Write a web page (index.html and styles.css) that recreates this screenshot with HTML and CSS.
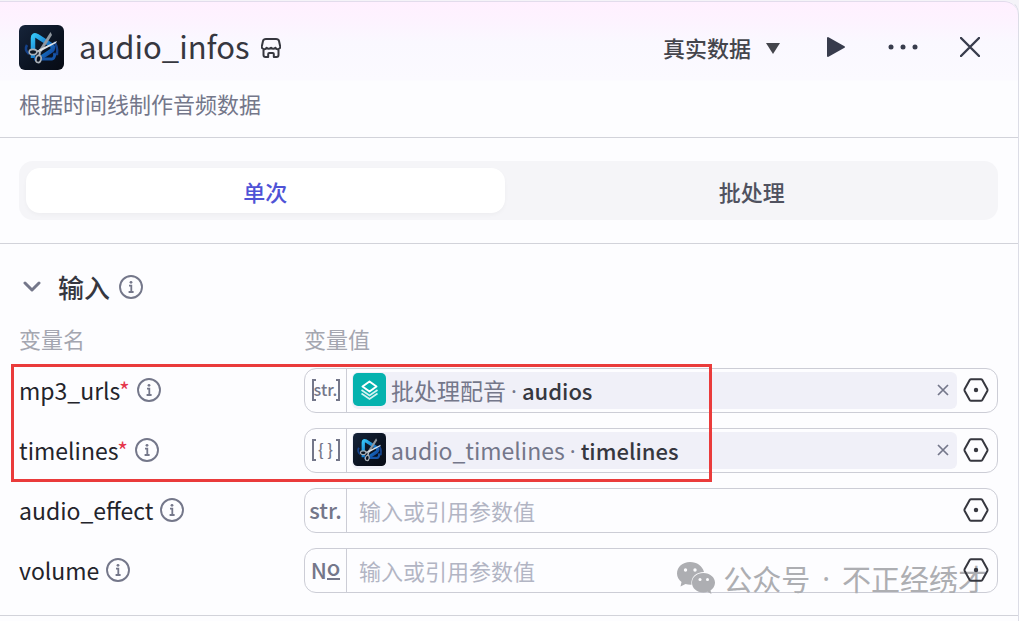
FILE: index.html
```html
<!DOCTYPE html>
<html lang="zh-CN">
<head>
    <meta charset="UTF-8">
    <meta name="viewport" content="width=device-width, initial-scale=1.0">
    <title>audio_infos</title>
    <link rel="stylesheet" href="styles.css">
</head>
<body>
    <!-- 公用图标 -->
    <svg class="sprite" aria-hidden="true">
        <defs>
            <linearGradient id="tileBg" x1="0" y1="0" x2="1" y2="1">
                <stop offset="0" stop-color="#16243a"/>
                <stop offset="0.6" stop-color="#0a1220"/>
                <stop offset="1" stop-color="#070b14"/>
            </linearGradient>
            <linearGradient id="tileBlue" x1="0" y1="0" x2="1" y2="1">
                <stop offset="0" stop-color="#35c3f5"/>
                <stop offset="0.5" stop-color="#167fd0"/>
                <stop offset="1" stop-color="#123a92"/>
            </linearGradient>
        </defs>
        <symbol id="icon-cut" viewBox="0 0 45 45">
            <rect width="45" height="45" rx="6" fill="url(#tileBg)"/>
            <path d="M8 20q-3 5 2 9M35 17q4 4 3 12h-4" fill="none" stroke="#15428a" stroke-width="2.500"/>
            <path d="M14 33V13q0-4 4-2l14 9q4 3 0 6l-9 6" fill="none" stroke="url(#tileBlue)" stroke-width="4.500" stroke-linejoin="round"/>
            <path d="M15 34h18q2 0 3-5" fill="none" stroke="#1555a8" stroke-width="3"/>
            <path d="M31.500 7L20 25l2 2.500L33 10z" fill="#8f979f"/>
            <path d="M38 16L20 24.500l-.5 3L37 18z" fill="#dfe4e8"/>
            <path d="M21 25.500l-5 1.500M21 27l-1 5" stroke="#b9bfc5" stroke-width="2"/>
            <ellipse cx="14" cy="27" rx="3.800" ry="2.600" fill="#0a1220" stroke="#aab1b8" stroke-width="1.600"/>
            <ellipse cx="19.500" cy="34" rx="2.600" ry="3.600" fill="#0a1220" stroke="#aab1b8" stroke-width="1.600" transform="rotate(12 19.500 34)"/>
        </symbol>
        <symbol id="icon-info" viewBox="0 0 24 24">
            <circle cx="12" cy="12" r="11" fill="none" stroke="currentColor" stroke-width="1.900"/>
            <circle cx="12" cy="7.300" r="1.400" fill="currentColor"/>
            <path d="M10 10.600h2.300V17M9.600 17h5" fill="none" stroke="currentColor" stroke-width="1.800"/>
        </symbol>
        <symbol id="icon-hex" viewBox="0 0 26 24">
            <path d="M8.200 1.200h9.600q1 0 1.500.8l5 9q.5 1 0 2l-5 9q-.5.800-1.500.8H8.200q-1 0-1.500-.8l-5-9q-.5-1 0-2l5-9q.5-.800 1.500-.8z" fill="none" stroke="currentColor" stroke-width="2"/>
            <circle cx="13" cy="12" r="2.200" fill="currentColor"/>
        </symbol>
        <symbol id="icon-remove" viewBox="0 0 12 12">
            <path d="M1 1l10 10M11 1L1 11" fill="none" stroke="currentColor" stroke-width="1.700"/>
        </symbol>
    </svg>

    <main class="panel">
        <header class="header">
            <div class="title-bar">
                <svg class="logo"><use href="#icon-cut"/></svg>
                <h1>audio_infos</h1>
                <svg class="store" viewBox="0 0 20 20" fill="none" stroke="currentColor" stroke-width="2" stroke-linejoin="round">
                    <path d="M5 1h10q2.500 0 3 2l1 4.500a2.500 2.500 0 0 1-4.500 2.200 2.800 2.800 0 0 1-4.500 0 2.800 2.800 0 0 1-4.500 0A2.500 2.500 0 0 1 1 7.500L2 3q.5-2 3-2z"/>
                    <path d="M2.500 12v5q0 2 2 2h2.700v-3q0-1 1-1h3.600q1 0 1 1v3h2.700q2 0 2-2v-5"/>
                </svg>
                <div class="actions">
                    <div class="mode">
                        <select aria-label="数据模式">
                            <option>真实数据</option>
                        </select>
                        <svg class="caret" viewBox="0 0 14 11"><path d="M0 0h14L7 11z" fill="currentColor"/></svg>
                    </div>
                    <button class="icon-button" aria-label="运行">
                        <svg width="20" height="22" viewBox="0 0 20 22"><path d="M2 2v18l16-9z" fill="currentColor" stroke="currentColor" stroke-width="2" stroke-linejoin="round"/></svg>
                    </button>
                    <button class="icon-button more" aria-label="更多">
                        <svg width="30" height="6" viewBox="0 0 30 6" fill="currentColor"><circle cx="3" cy="3" r="2.500"/><circle cx="15" cy="3" r="2.500"/><circle cx="27" cy="3" r="2.500"/></svg>
                    </button>
                    <button class="icon-button" aria-label="关闭">
                        <svg width="20" height="20" viewBox="0 0 20 20"><path d="M1 1l18 18M19 1L1 19" fill="none" stroke="currentColor" stroke-width="2.400" stroke-linecap="round"/></svg>
                    </button>
                </div>
            </div>
            <p class="description">根据时间线制作音频数据</p>
        </header>

        <section class="tabs-section">
            <div class="tabs" role="tablist">
                <button class="tab active" role="tab" aria-selected="true">单次</button>
                <button class="tab" role="tab" aria-selected="false">批处理</button>
            </div>
        </section>

        <section class="inputs">
            <div class="section-title">
                <svg class="chevron" viewBox="0 0 18 12"><path d="M2 2l7 7 7-7" fill="none" stroke="currentColor" stroke-width="3" stroke-linecap="round" stroke-linejoin="round"/></svg>
                <h2>输入</h2>
                <svg class="info"><use href="#icon-info"/></svg>
            </div>

            <div class="row columns">
                <span>变量名</span>
                <span>变量值</span>
            </div>

            <div class="rows highlight">
                <div class="row">
                    <div class="name">
                        <span>mp3_urls<span class="required">*</span></span>
                        <svg class="info"><use href="#icon-info"/></svg>
                    </div>
                    <div class="field">
                        <span class="type"><span class="array">str.</span></span>
                        <div class="tag">
                            <svg class="tag-icon" viewBox="0 0 33 33">
                                <rect width="33" height="33" rx="5" fill="#05b2ae"/>
                                <path d="M16.500 8.500l7 5-7 5-7-5z" fill="none" stroke="#fff" stroke-width="2" stroke-linejoin="round"/>
                                <path d="M8.500 17l8 5.500 8-5.500M8.500 20.500l8 5.500 8-5.500" fill="none" stroke="#d5f3f2" stroke-width="1.700"/>
                            </svg>
                            <span class="source">批处理配音</span>
                            <span class="dot">·</span>
                            <span class="output">audios</span>
                            <button class="remove" aria-label="移除"><svg width="12" height="12"><use href="#icon-remove"/></svg></button>
                        </div>
                        <button class="picker" aria-label="选择变量"><svg width="26" height="24"><use href="#icon-hex"/></svg></button>
                    </div>
                </div>
                <div class="row">
                    <div class="name">
                        <span>timelines<span class="required">*</span></span>
                        <svg class="info"><use href="#icon-info"/></svg>
                    </div>
                    <div class="field">
                        <span class="type"><span class="array">{ }</span></span>
                        <div class="tag">
                            <svg class="tag-icon"><use href="#icon-cut"/></svg>
                            <span class="source">audio_timelines</span>
                            <span class="dot">·</span>
                            <span class="output">timelines</span>
                            <button class="remove" aria-label="移除"><svg width="12" height="12"><use href="#icon-remove"/></svg></button>
                        </div>
                        <button class="picker" aria-label="选择变量"><svg width="26" height="24"><use href="#icon-hex"/></svg></button>
                    </div>
                </div>
            </div>

            <div class="rows">
                <div class="row">
                    <div class="name">
                        <label for="audio_effect">audio_effect</label>
                        <svg class="info"><use href="#icon-info"/></svg>
                    </div>
                    <div class="field">
                        <span class="type">str.</span>
                        <input id="audio_effect" type="text" placeholder="输入或引用参数值">
                        <button class="picker" aria-label="选择变量"><svg width="26" height="24"><use href="#icon-hex"/></svg></button>
                    </div>
                </div>
                <div class="row">
                    <div class="name">
                        <label for="volume">volume</label>
                        <svg class="info"><use href="#icon-info"/></svg>
                    </div>
                    <div class="field">
                        <span class="type">N<span class="ordinal">o</span></span>
                        <input id="volume" type="text" placeholder="输入或引用参数值">
                        <button class="picker" aria-label="选择变量"><svg width="26" height="24"><use href="#icon-hex"/></svg></button>
                    </div>
                    <div class="watermark">
                        <svg width="40" height="34" viewBox="0 0 40 34">
                            <path d="M14 1C6.500 1 1 6 1 12.500c0 3.500 1.800 6.500 4.500 8.500L4.500 25.500l5-2.500q2.500.8 6 .7C14.500 16 20 11 28 11 26.500 5 21 1 14 1z" fill="currentColor"/>
                            <path d="M27.500 12C20.500 12 16 16.500 16 21.800S20.500 31.500 27.500 31.500q2 0 4-.7l4 2.200-1-3.500c2.500-1.800 4.500-4.500 4.500-7.700C39 16.500 34 12 27.500 12z" fill="currentColor"/>
                            <g fill="#fdfdff"><circle cx="9.500" cy="9" r="1.700"/><circle cx="19" cy="9" r="1.700"/><circle cx="24" cy="18.500" r="1.500"/><circle cx="31.500" cy="18.500" r="1.500"/></g>
                        </svg>
                        <span>公众号</span>
                        <span class="dot">·</span>
                        <span>不正经绣才</span>
                    </div>
                </div>
            </div>
        </section>
    </main>
</body>
</html>
```
FILE: styles.css
```css
* {
    margin: 0;
    padding: 0;
    box-sizing: border-box;
}

body {
    background: #f4f3f8;
    font-family: "Noto Sans CJK SC", "Noto Sans", sans-serif;
    font-size: 22px;
    line-height: 32px;
    color: #23242b;
}

button,
input,
select {
    font: inherit;
    color: inherit;
    border: none;
    outline: none;
    background: none;
}

button {
    cursor: pointer;
}

svg {
    display: block;
    flex: none;
}

.sprite {
    position: absolute;
    width: 0;
    height: 0;
}

.panel {
    min-height: 100vh;
    border-top: 1px solid #f4f3f8;
    background: #fdfdff;
    border-right: 1px solid #dcdde6;
    border-top-right-radius: 14px;
}

/* 头部 */
.header {
    padding: 23px 20px 18px 19px;
    border-top: 1px solid #e2dcec;
    border-bottom: 1px solid #d2d3da;
    border-top-right-radius: 14px;
    background: linear-gradient(#fff0ff, #fdf3ff 20px, #faf8ff 40px, #fbfaff 78px, #fdfdff 79px);
}

.title-bar {
    display: flex;
    align-items: center;
    height: 45px;
}

.logo {
    width: 45px;
    height: 45px;
    margin-right: 15px;
}

h1 {
    padding-bottom: 4px;
    font-size: 31px;
    font-weight: 400;
    color: #36373f;
}

.store {
    width: 20px;
    height: 20px;
    margin-left: 11px;
    color: #36373f;
}

.actions {
    display: flex;
    align-items: center;
    margin: 0 14px 2px auto;
    color: #383c4d;
}

.mode {
    display: flex;
    align-items: center;
    gap: 14px;
    margin-right: 42px;
    font-weight: 500;
    color: #44454c;
}

.mode select {
    appearance: none;
    height: 32px;
}

.caret {
    width: 14px;
    height: 11px;
    margin-top: 4px;
}

.icon-button {
    padding: 4px;
}

.more {
    margin: 0 34px;
}

.description {
    margin-top: 17px;
    color: #74778a;
}

/* 标签切换 */
.tabs-section {
    padding: 23px 20px 23px 19px;
    border-bottom: 1px solid #d2d3da;
}

.tabs {
    display: flex;
    gap: 8px;
    padding: 7px;
    border-radius: 14px;
    background: #f5f5f8;
}

.tab {
    flex: 1;
    height: 45px;
    border-radius: 14px;
    font-weight: 500;
    color: #50525f;
}

.tab.active {
    background: #fff;
    color: #4f53d6;
    box-shadow: 0 2px 4px rgba(0, 0, 0, 0.03);
}

/* 输入 */
.inputs {
    padding: 28px 20px 22px 19px;
    border-bottom: 1px solid #d2d3da;
}

.section-title {
    display: flex;
    align-items: center;
    height: 32px;
    padding: 0 0 2px 4px;
}

.chevron {
    width: 18px;
    height: 12px;
    margin-right: 17px;
    color: #74778a;
}

h2 {
    margin-right: 9px;
    font-size: 26px;
    font-weight: 500;
    color: #36373f;
}

.info {
    width: 24px;
    height: 24px;
    color: #74778a;
}

.row {
    display: grid;
    grid-template-columns: 285px 1fr;
    align-items: center;
    position: relative;
}

.columns {
    margin: 18px 0 14px;
    color: #a4a6b0;
}

.rows {
    display: grid;
    gap: 15px;
    position: relative;
}

.rows + .rows {
    margin-top: 15px;
}

/* 红色标注框 */
.highlight::after {
    content: "";
    position: absolute;
    top: -4px;
    bottom: -9px;
    left: -8px;
    width: 71%;
    border: 3px solid #ea3b3b;
    pointer-events: none;
}

.name {
    display: flex;
    align-items: center;
    gap: 7px;
    padding-bottom: 2px;
    font-size: 23px;
}

.required {
    color: #e5364c;
}

.field {
    display: flex;
    align-items: center;
    height: 45px;
    border: 1px solid #cccdd6;
    border-radius: 12px;
}

.type {
    display: flex;
    align-items: center;
    justify-content: center;
    align-self: stretch;
    width: 42px;
    padding-bottom: 4px;
    border-right: 1px solid #cccdd6;
    font-weight: 500;
    color: #74778a;
}

/* 数组类型外面的方括号 */
.array {
    position: relative;
    width: 28px;
    font-size: 16px;
    line-height: 20px;
    text-align: center;
}

.array::before,
.array::after {
    content: "";
    position: absolute;
    top: 0;
    bottom: -2px;
    width: 2px;
    border: 2px solid #74778a;
}

.array::before {
    left: 0;
    border-right: none;
}

.array::after {
    right: 0;
    border-left: none;
}

/* 序号符号，字母下带横线 */
.ordinal {
    margin-bottom: 4px;
    border-bottom: 2px solid #74778a;
    line-height: 24px;
}

.tag {
    display: flex;
    flex: 1;
    align-items: center;
    height: 37px;
    margin-left: 5px;
    padding: 0 8px 2px 1px;
    border-radius: 6px;
    background: #f0f0f8;
}

.tag-icon {
    width: 33px;
    height: 33px;
    margin-right: 5px;
}

.source {
    font-size: 23px;
    color: #74778a;
}

.dot {
    margin: 0 5px;
    font-family: "Noto Sans", sans-serif;
}

.tag .dot {
    color: #74778a;
}

.output {
    font-weight: 500;
    color: #36373f;
}

.remove {
    margin-left: auto;
    color: #74778a;
}

.field input {
    flex: 1;
    min-width: 0;
    height: 36px;
    padding: 0 0 2px 12px;
}

.field input::placeholder {
    color: #b2b5c4;
}

.picker {
    position: relative;
    z-index: 2;
    margin: 0 8px 1px 6px;
    color: #36373f;
}

.watermark {
    display: flex;
    align-items: center;
    position: absolute;
    right: 11px;
    bottom: -2px;
    font-size: 29px;
    color: #adaeb2;
    pointer-events: none;
}

.watermark svg {
    margin-right: 7px;
}

.watermark .dot {
    margin: 0 12px;
}
```
